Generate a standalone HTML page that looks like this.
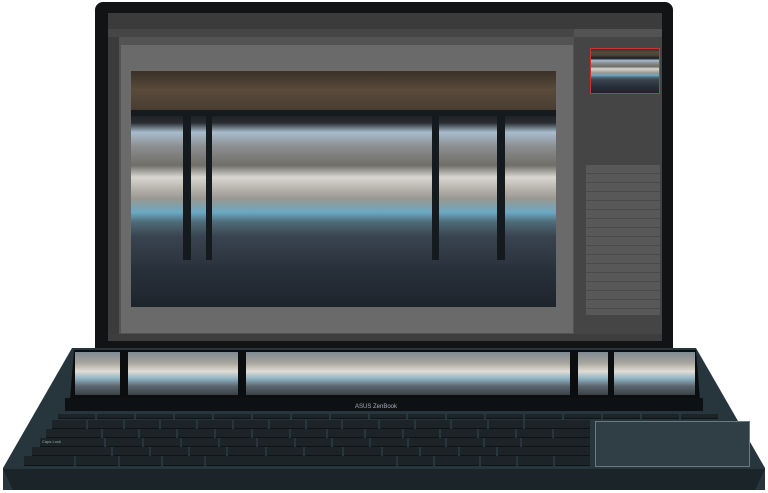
<!DOCTYPE html><html><head><style>
*{margin:0;padding:0;box-sizing:border-box}
body{width:768px;height:493px;background:#fff;position:relative;overflow:hidden;font-family:"Liberation Sans",sans-serif}
.a{position:absolute}
.photo{background:linear-gradient(180deg,#3a3129 0%,#5a4a3a 8%,#4a3e33 16%,#1e2226 19%,#2a2e32 22%,#a9bccd 26%,#8c8e90 32%,#6f6e68 40%,#d8d6d0 45%,#9a9890 54%,#6aa8c4 60%,#4f6a78 64%,#3a4450 70%,#27303a 85%,#1e242c 100%)}
.row{position:absolute;display:flex;gap:2px}
.row div{background:#1c2428;border-radius:1px;height:100%;flex:1;box-shadow:0 1px 0 #0e1416;color:#9aa;font-size:4px;padding:1px 2px}
</style></head><body>
<div class="a" style="left:95px;top:2px;width:578px;height:348px;background:#121314;border-radius:8px 8px 0 0"></div>
<div class="a" style="left:108px;top:13px;width:554px;height:328px;background:#535353"></div>
<div class="a" style="left:108px;top:13px;width:554px;height:16px;background:#3b3b3b"></div>
<div class="a" style="left:108px;top:29px;width:466px;height:8px;background:#464646"></div>
<div class="a" style="left:108px;top:37px;width:11px;height:297px;background:#3b3b3b"></div>
<div class="a" style="left:121px;top:45px;width:452px;height:288px;background:#6a6a6a"></div>
<div class="a photo" style="left:131px;top:71px;width:425px;height:236px"></div>
<div class="a" style="left:183px;top:110px;width:8px;height:150px;background:#151a1f"></div>
<div class="a" style="left:206px;top:110px;width:6px;height:150px;background:#151a1f"></div>
<div class="a" style="left:432px;top:110px;width:7px;height:150px;background:#151a1f"></div>
<div class="a" style="left:497px;top:110px;width:8px;height:150px;background:#151a1f"></div>
<div class="a" style="left:131px;top:110px;width:425px;height:6px;background:#151a1f"></div>
<div class="a" style="left:574px;top:37px;width:88px;height:297px;background:#454545"></div>
<div class="a photo" style="left:590px;top:48px;width:70px;height:46px;border:1px solid #c33"></div>
<div class="a" style="left:586px;top:165px;width:74px;height:150px;background:repeating-linear-gradient(180deg,#585858 0 8px,#4a4a4a 8px 9px)"></div>
<div class="a" style="left:108px;top:334px;width:554px;height:7px;background:#3d3d3d"></div>
<div class="a" style="left:0;top:348px;width:768px;height:142px;background:#27363c;clip-path:polygon(72px 0,696px 0,765px 120px,765px 142px,3px 142px,3px 120px);"></div>
<div class="a" style="left:0;top:469px;width:768px;height:21px;background:#1b2529;clip-path:polygon(3px 0,765px 0,755px 21px,13px 21px)"></div>
<div class="a" style="left:70px;top:350px;width:630px;height:50px;background:#0b0d0f;clip-path:polygon(4px 0,626px 0,630px 50px,0 50px)"></div>
<div class="a photo" style="left:75px;top:352px;width:620px;height:43px;background:linear-gradient(180deg,#7e8a92 0%,#a7a49c 25%,#e0ddd6 45%,#8fb2c2 62%,#5a646c 80%,#3a4248 100%)"></div>
<div class="a" style="left:120px;top:352px;width:8px;height:46px;background:#0b0d0f"></div>
<div class="a" style="left:238px;top:352px;width:8px;height:46px;background:#0b0d0f"></div>
<div class="a" style="left:570px;top:352px;width:8px;height:46px;background:#0b0d0f"></div>
<div class="a" style="left:608px;top:352px;width:6px;height:46px;background:#0b0d0f"></div>
<div class="a" style="left:65px;top:398px;width:638px;height:13px;background:#0d1113"></div>
<div class="a" style="left:355px;top:404px;font-size:6px;color:#aab">ASUS ZenBook</div>
<div class="row" style="left:58px;top:414px;width:660px;height:4px"><div></div><div></div><div></div><div></div><div></div><div></div><div></div><div></div><div></div><div></div><div></div><div></div><div></div><div></div><div></div><div></div><div></div></div>
<div class="row" style="left:52px;top:420px;width:538px;height:8px"><div></div><div></div><div></div><div></div><div></div><div></div><div></div><div></div><div></div><div></div><div></div><div></div><div></div><div style="flex:2"></div></div>
<div class="row" style="left:46px;top:429px;width:544px;height:8px"><div style="flex:1.6"></div><div></div><div></div><div></div><div></div><div></div><div></div><div></div><div></div><div></div><div></div><div></div><div></div><div></div></div>
<div class="row" style="left:40px;top:438px;width:550px;height:8px"><div style="flex:1.9">Caps Lock</div><div></div><div></div><div></div><div></div><div></div><div></div><div></div><div></div><div></div><div></div><div></div><div style="flex:2"></div></div>
<div class="row" style="left:32px;top:447px;width:558px;height:8px"><div style="flex:2.3"></div><div></div><div></div><div></div><div></div><div></div><div></div><div></div><div></div><div></div><div></div><div style="flex:2.7"></div></div>
<div class="row" style="left:24px;top:456px;width:566px;height:9px"><div style="flex:1.5"></div><div style="flex:1.2"></div><div style="flex:1.2"></div><div style="flex:1.2"></div><div style="flex:6"></div><div></div><div style="flex:1.3"></div><div></div><div></div><div></div></div>
<div class="a" style="left:595px;top:421px;width:155px;height:46px;background:#2f3f45;border:1px solid #6b7a80"></div>
</body></html>
